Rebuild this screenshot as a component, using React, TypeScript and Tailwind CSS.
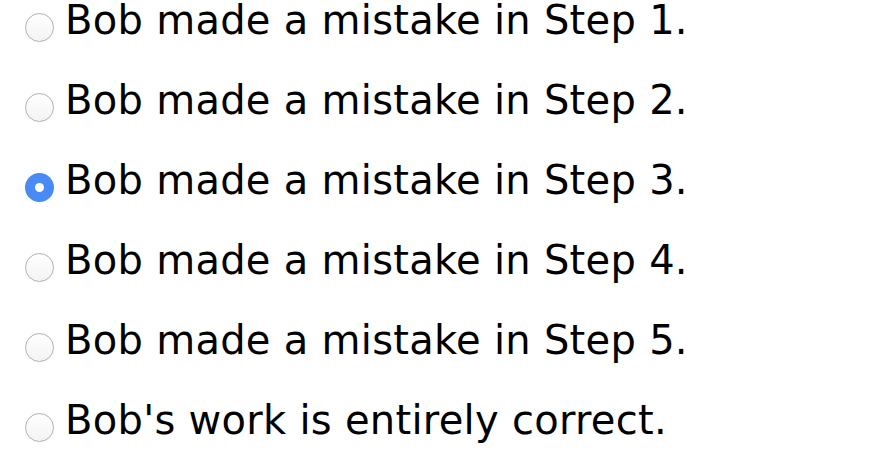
import { useState } from 'react'

const options = [
  'Bob made a mistake in Step 1.',
  'Bob made a mistake in Step 2.',
  'Bob made a mistake in Step 3.',
  'Bob made a mistake in Step 4.',
  'Bob made a mistake in Step 5.',
  "Bob's work is entirely correct.",
]

function Radio({ checked }: { checked: boolean }) {
  if (checked) {
    return (
      <span className="w-[29px] h-[29px] shrink-0 rounded-full bg-[#4a8af5] flex items-center justify-center">
        <span className="block w-[9px] h-[9px] rounded-full bg-white" />
      </span>
    )
  }
  return (
    <span className="block w-[29px] h-[29px] shrink-0 rounded-full border border-[#b0b0b0] bg-gradient-to-b from-white to-[#f3f3f3]" />
  )
}

export default function App() {
  const [selected, setSelected] = useState(2)

  return (
    <div className="w-[890px] h-[466px] bg-white pl-[25px]" style={{ fontFamily: '"DejaVu Sans", Verdana, sans-serif' }}>
      {options.map((label, i) => (
        <label
          key={i}
          className="h-[80px] flex items-start cursor-pointer"
          onClick={() => setSelected(i)}
        >
          <span className="block mt-[13px] shrink-0">
            <Radio checked={selected === i} />
          </span>
          <span className="ml-[11px] text-[40px] leading-[40px] tracking-[0.28px] text-black whitespace-nowrap">{label}</span>
        </label>
      ))}
    </div>
  )
}
